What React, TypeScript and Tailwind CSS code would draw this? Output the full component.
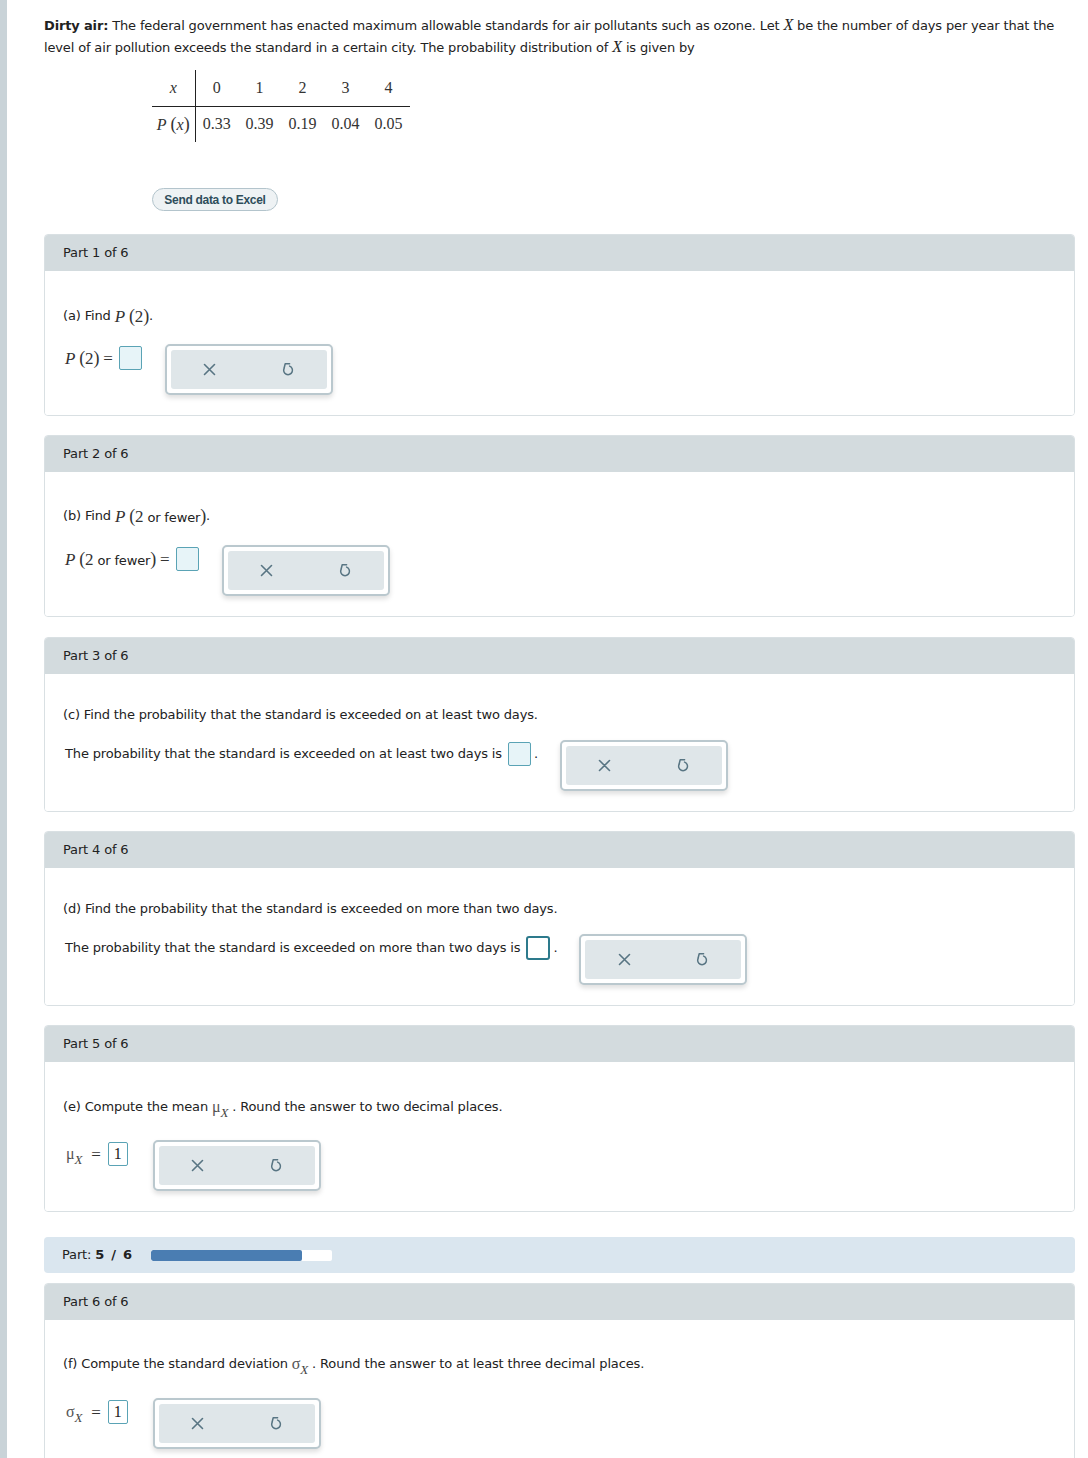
import React from "react";

const serif = "font-['Liberation_Serif',serif]";

function XIcon() {
  return (
    <svg width="13" height="13" viewBox="0 0 13 13" fill="none">
      <path d="M1.5 1.5 L11.5 11.5 M11.5 1.5 L1.5 11.5" stroke="#587583" strokeWidth="1.6" strokeLinecap="round" />
    </svg>
  );
}

function UndoIcon() {
  return (
    <svg width="14" height="15" viewBox="0 0 14 15" fill="none">
      <path d="M8.6 1.8 H4.2 L3.2 5.8" stroke="#587583" strokeWidth="1.5" strokeLinecap="round" strokeLinejoin="round" />
      <path d="M3.1 6.3 A4.4 4.4 0 1 0 8.6 4.1" stroke="#587583" strokeWidth="1.5" strokeLinecap="round" fill="none" />
    </svg>
  );
}

function ActionGroup() {
  return (
    <div className="flex h-[51px] w-[168px] shrink-0 rounded-[5px] border-2 border-[#bac8ce] bg-white p-[4px] shadow-[0_3px_5px_rgba(0,0,0,0.13)]">
      <div className="flex flex-1 items-center rounded-[3px] bg-[#dfe6e9]">
        <div className="flex flex-1 justify-center">
          <XIcon />
        </div>
        <div className="flex flex-1 justify-center">
          <UndoIcon />
        </div>
      </div>
    </div>
  );
}

function Blank({ focused = false }: { focused?: boolean }) {
  if (focused) {
    return <span className="inline-block h-[24px] w-[24px] shrink-0 rounded-[3px] border-2 border-[#2d7a8c] bg-white" />;
  }
  return <span className="inline-block h-[24px] w-[23px] shrink-0 rounded-[2px] border-[1.5px] border-[#5aa3b5] bg-[#e7f4f8]" />;
}

function Filled() {
  return (
    <span className={`inline-flex h-[24px] w-[20px] items-center rounded-[2px] border-[1.5px] border-[#5aa3b5] bg-white pl-[5px] text-[16px] leading-none text-[#222] ${serif}`}>
      1
    </span>
  );
}

function PartCard({ n, children, pt, className = "" }: { n: number; children: React.ReactNode; pt: string; className?: string }) {
  return (
    <div className={`overflow-hidden rounded-[4px] border border-[#d9e0e3] ${className}`}>
      <div className="flex h-[36px] items-center bg-[#d3dbde] pl-[18px] text-[13px] text-[#222]">Part {n} of 6</div>
      <div className={`bg-white pl-[18px] pb-[20px] ${pt}`}>{children}</div>
    </div>
  );
}

function Paren({ children }: { children: React.ReactNode }) {
  return <span className={`${serif} text-[18px] text-[#333]`}>{children}</span>;
}

function PMath({ inner }: { inner: React.ReactNode }) {
  return (
    <span className="inline-flex items-baseline leading-none">
      <i className={`${serif} text-[17px] text-[#333]`}>P</i>
      <span className="w-[4px]" />
      <Paren>(</Paren>
      {inner}
      <Paren>)</Paren>
    </span>
  );
}

function Two() {
  return <span className={`${serif} text-[17px] text-[#333]`}>2</span>;
}

function Sub({ sym }: { sym: string }) {
  return (
    <span className="inline-flex items-baseline leading-none">
      <span className={`${serif} text-[16px] text-[#555]`}>{sym}</span>
      <i className={`${serif} relative top-[5px] text-[13px] text-[#444]`}>X</i>
    </span>
  );
}

function Question({ children }: { children: React.ReactNode }) {
  return <div className="flex h-[22px] items-center whitespace-nowrap">{children}</div>;
}

function Row({ gap, left, groupMl }: { gap: string; left: React.ReactNode; groupMl: string }) {
  return (
    <div className={`flex items-start pl-[2px] ${gap}`}>
      <div className="mt-[2px] flex h-[24px] items-center whitespace-nowrap">{left}</div>
      <div className={groupMl}>
        <ActionGroup />
      </div>
    </div>
  );
}

export default function App() {
  const twoOrFewer = (
    <>
      <Two />
      <span className="text-[13px]">&nbsp;or fewer</span>
    </>
  );
  return (
    <div className="flex min-h-[1458px] bg-white font-['DejaVu_Sans',sans-serif] text-[13px] tracking-[-0.15px] text-[#222]">
      <div className="w-[7px] shrink-0 bg-[#c9d3d8]" />
      <div className="min-w-0 flex-1 pl-[37px] pr-[13px] pt-[15px]">
        <div className="h-[22px] whitespace-nowrap leading-[22px]">
          <b>Dirty air:</b> The federal government has enacted maximum allowable standards for air pollutants such as ozone. Let{" "}
          <i className={`${serif} text-[16px] leading-none`}>X</i> be the number of days per year that the
        </div>
        <div className="h-[22px] whitespace-nowrap leading-[22px]">
          level of air pollution exceeds the standard in a certain city. The probability distribution of{" "}
          <i className={`${serif} text-[16px] leading-none`}>X</i> is given by
        </div>

        <table className={`ml-[108px] mt-[11px] border-collapse ${serif} text-[16px] leading-none tracking-normal text-[#333]`}>
          <tbody>
            <tr className="h-[36px]">
              <td className="w-[43px] border-r-[1.5px] border-b-[1.5px] border-[#222] text-center">
                <i>x</i>
              </td>
              {["0", "1", "2", "3", "4"].map((v) => (
                <td key={v} className="w-[43px] border-b-[1.5px] border-[#222] text-center">
                  {v}
                </td>
              ))}
            </tr>
            <tr className="h-[36px]">
              <td className="w-[43px] border-r-[1.5px] border-[#222] text-center">
                <i>P</i> <span className="text-[18px]">(</span>
                <i>x</i>
                <span className="text-[18px]">)</span>
              </td>
              {["0.33", "0.39", "0.19", "0.04", "0.05"].map((v) => (
                <td key={v} className="w-[43px] text-center">
                  {v}
                </td>
              ))}
            </tr>
          </tbody>
        </table>

        <button className="ml-[108px] mt-[46px] flex h-[23px] w-[126px] items-center justify-center rounded-full border border-[#b3c4cc] bg-[#eef2f4] font-['Liberation_Sans',sans-serif] text-[12px] font-bold tracking-[-0.3px] text-[#2e4d5b]">
          Send data to Excel
        </button>

        <PartCard n={1} pt="pt-[34px]" className="mt-[23px]">
          <Question>
            (a) Find&nbsp;<PMath inner={<Two />} />.
          </Question>
          <Row
            gap="mt-[17px]"
            groupMl="ml-[23px]"
            left={
              <>
                <PMath inner={<Two />} />
                <span className={`${serif} ml-[4px] mr-[6px] text-[17px] leading-none text-[#333]`}>=</span>
                <Blank />
              </>
            }
          />
        </PartCard>

        <PartCard n={2} pt="pt-[33px]" className="mt-[19px]">
          <Question>
            (b) Find&nbsp;<PMath inner={twoOrFewer} />.
          </Question>
          <Row
            gap="mt-[18px]"
            groupMl="ml-[23px]"
            left={
              <>
                <PMath inner={twoOrFewer} />
                <span className={`${serif} ml-[4px] mr-[6px] text-[17px] leading-none text-[#333]`}>=</span>
                <Blank />
              </>
            }
          />
        </PartCard>

        <PartCard n={3} pt="pt-[30px]" className="mt-[20px]">
          <Question>(c) Find the probability that the standard is exceeded on at least two days.</Question>
          <Row
            gap="mt-[14px]"
            groupMl="ml-[22px]"
            left={
              <>
                <span>The probability that the standard is exceeded on at least two days is</span>
                <span className="ml-[6px] flex">
                  <Blank />
                </span>
                <span className="ml-[3px]">.</span>
              </>
            }
          />
        </PartCard>

        <PartCard n={4} pt="pt-[30px]" className="mt-[19px]">
          <Question>(d) Find the probability that the standard is exceeded on more than two days.</Question>
          <Row
            gap="mt-[14px]"
            groupMl="ml-[22px]"
            left={
              <>
                <span>The probability that the standard is exceeded on more than two days is</span>
                <span className="ml-[6px] flex">
                  <Blank focused />
                </span>
                <span className="ml-[3px]">.</span>
              </>
            }
          />
        </PartCard>

        <PartCard n={5} pt="pt-[34px]" className="mt-[19px]">
          <Question>
            (e) Compute the mean&nbsp;<Sub sym="μ" />&nbsp;. Round the answer to two decimal places.
          </Question>
          <Row
            gap="mt-[22px] pl-[3px]"
            groupMl="ml-[25px]"
            left={
              <>
                <Sub sym="μ" />
                <span className={`${serif} ml-[9px] mr-[7px] text-[17px] leading-none text-[#333]`}>=</span>
                <Filled />
              </>
            }
          />
        </PartCard>

        <div className="mt-[25px] flex h-[36px] items-center rounded-[4px] bg-[#dae6ef] pl-[18px]">
          <span>
            Part: <b className="tracking-[1.2px]">5 / 6</b>
          </span>
          <div className="ml-[18px] h-[11px] w-[181px] overflow-hidden rounded-[2px] bg-white">
            <div className="h-full w-[151px] rounded-[2px] bg-[#4a7db2]" />
          </div>
        </div>

        <PartCard n={6} pt="pt-[33px]" className="mt-[10px]">
          <Question>
            (f) Compute the standard deviation&nbsp;<Sub sym="σ" />&nbsp;. Round the answer to at least three decimal places.
          </Question>
          <Row
            gap="mt-[23px] pl-[3px]"
            groupMl="ml-[25px]"
            left={
              <>
                <Sub sym="σ" />
                <span className={`${serif} ml-[9px] mr-[7px] text-[17px] leading-none text-[#333]`}>=</span>
                <Filled />
              </>
            }
          />
        </PartCard>
      </div>
    </div>
  );
}
